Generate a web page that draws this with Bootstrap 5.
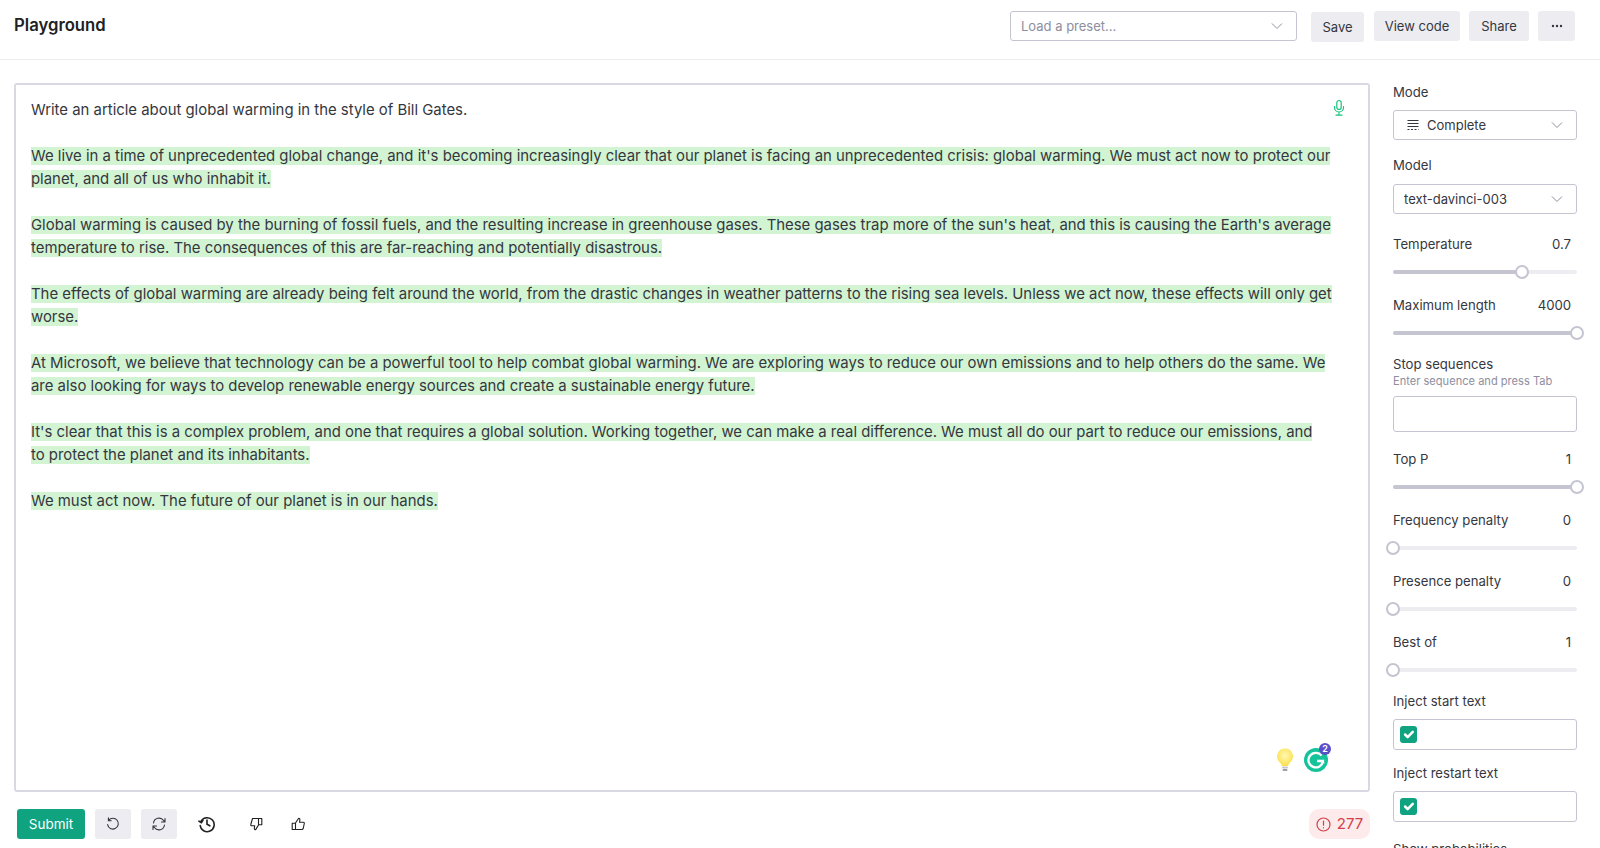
<!DOCTYPE html>
<html lang="en">
<head>
<meta charset="utf-8">
<title>Playground</title>
<link href="https://cdn.jsdelivr.net/npm/bootstrap@5.3.0/dist/css/bootstrap.min.css" rel="stylesheet">
<style>
html,body{height:848px;overflow:hidden;background:#fff}
body{font-family:Inter,"Liberation Sans",sans-serif;color:#353740;font-size:13.15px}
.top-bar{height:60px;border-bottom:1px solid #ececf1;padding:0 25px 6px 14px}
.page-title{font-size:16.7px;font-weight:600;color:#202123;margin:0 auto 4px 0;line-height:20px}
.sel-box{border:1px solid #c5c5d2;border-radius:3px;height:30px;padding:0 12px 0 10px;background-image:none;font-size:13px;color:#353740;display:flex;align-items:center;justify-content:space-between;line-height:20px}
.preset{width:287px;color:#8e8ea0;margin-right:14px;margin-top:-1px}
.gray-btn{background:#ececf1;border:0;border-radius:3px;height:30px;padding:0 11px;font-size:13px;color:#353740;line-height:30px}
.gray-btn:hover{background:#d9d9e3}
.save-btn{width:53px;padding:0;margin-right:10px}
.code-btn{width:86px;padding:0;margin-right:9px;margin-top:-2px}
.share-btn{width:60px;padding:0;margin-right:9px;margin-top:-2px}
.more-btn{width:37px;padding:0;margin-top:-2px}
.work-area{padding:23px 23px 0 14px}
.left-col{width:1356px}
.editor{height:709px;border:2px solid #d9d9e3;border-radius:3px;padding:14px 15px;font-size:14.9px;line-height:23px;color:#353740;position:relative}
.editor p{margin:0 0 23px;width:1320px}
.hl{background:#d2f4d3}
.mic{position:absolute;right:21px;top:14px}
.bulb{position:absolute;left:1259px;top:662px}
.gram{position:absolute;left:1287px;top:658px;width:32px;height:30px}
.gram-num{position:absolute;right:4px;top:0;width:12px;height:12px;border-radius:50%;background:#5b4fc9;color:#fff;font-size:9px;line-height:12px;text-align:center;font-weight:600}
.action-row{padding:17px 0 0 3px}
.go-btn{background:#10a37f;border:0;color:#fff;width:68px;height:30px;padding:0;border-radius:3px;font-size:13.5px;line-height:30px;margin-right:10px}
.go-btn:hover{background:#10a37f;color:#fff}
.ic-btn{width:36px;padding:0;display:flex;align-items:center;justify-content:center;margin-right:10px}
.plain-ic{width:24px;height:30px;display:flex;align-items:center;justify-content:center}
.hist-ic{margin-left:8px}
.down-ic{margin-left:25px}
.up-ic{margin-left:18px}
.warn-pill{height:30px;width:61px;border-radius:10px;background:#fdeaea;color:#d13f4a;font-size:15px;margin-left:auto;gap:6px}
.side-col{width:184px;margin-left:23px}
.lbl{line-height:20px;height:20px;white-space:nowrap}
.lbl-mode{margin-bottom:8px;margin-top:-1px}
.lbl-model{margin-top:15px;margin-bottom:9px}
.sl-lbl{margin-top:20px}
.val{margin-right:6px}
.slide-wrap{height:14px;margin:11px 0 16px;position:relative;display:flex;align-items:center}
.track{height:4px;background:#ececf1;border-radius:2px;width:100%}
.fill{height:4px;background:#c5c5d2;border-radius:2px}
.knob{position:absolute;top:0;width:14px;height:14px;margin-left:-7px;border-radius:50%;background:#fff;border:2px solid #c5c5d2}
.stop-lbl{margin-top:-2px}
.hint{font-size:11.1px;line-height:16px;color:#8e8ea0;white-space:nowrap;margin-top:-1px}
.stop-input{height:36px;border:1px solid #c5c5d2;border-radius:3px;margin-top:7px;margin-bottom:17px}
.inj-first{margin-top:-2px}
.check-box{height:31px;border:1px solid #c5c5d2;border-radius:3px;padding-left:6px;margin-top:8px;margin-bottom:13px;display:flex;align-items:center}
.check-box .form-check-input{width:17px;height:17px;margin:0;border:0;border-radius:3px;background-color:#10a37f}
.prob-lbl{margin-top:17px}
.gram-ic{margin-top:4px}
</style>
</head>
<body>
<header class="top-bar d-flex align-items-center">
  <h1 class="page-title">Playground</h1>
  <div class="sel-box form-select preset"><span>Load a preset...</span>
    <svg width="14" height="14" viewBox="0 0 14 14" fill="none" stroke="#8e8ea0"><path d="M2 4.5l5 5 5-5"/></svg></div>
  <button class="btn gray-btn save-btn">Save</button>
  <button class="btn gray-btn code-btn">View code</button>
  <button class="btn gray-btn share-btn">Share</button>
  <button class="btn gray-btn more-btn d-flex align-items-center justify-content-center" aria-label="More">
    <svg width="12" height="4" viewBox="0 0 12 4" fill="#353740"><circle cx="2" cy="2" r="1.2"/><circle cx="6" cy="2" r="1.2"/><circle cx="10" cy="2" r="1.2"/></svg></button>
</header>
<main class="work-area d-flex align-items-start">
  <div class="left-col">
    <div class="editor">
      <p>Write an article about global warming in the style of Bill Gates.</p>
      <p><span class="hl">We live in a time of unprecedented global change, and it's becoming increasingly clear that our planet is facing an unprecedented crisis: global warming. We must act now to protect our planet, and all of us who inhabit it.</span></p>
      <p><span class="hl">Global warming is caused by the burning of fossil fuels, and the resulting increase in greenhouse gases. These gases trap more of the sun's heat, and this is causing the Earth's average temperature to rise. The consequences of this are far-reaching and potentially disastrous.</span></p>
      <p><span class="hl">The effects of global warming are already being felt around the world, from the drastic changes in weather patterns to the rising sea levels. Unless we act now, these effects will only get worse.</span></p>
      <p><span class="hl">At Microsoft, we believe that technology can be a powerful tool to help combat global warming. We are exploring ways to reduce our own emissions and to help others do the same. We are also looking for ways to develop renewable energy sources and create a sustainable energy future.</span></p>
      <p><span class="hl">It's clear that this is a complex problem, and one that requires a global solution. Working together, we can make a real difference. We must all do our part to reduce our emissions, and<br>to protect the planet and its inhabitants.</span></p>
      <p><span class="hl">We must act now. The future of our planet is in our hands.</span></p>
      <svg class="mic" width="16" height="18" viewBox="0 0 16 18" fill="none" stroke="#19c37d" stroke-width="1.2" stroke-linecap="round"><rect x="5.8" y="1.5" width="4.4" height="9" rx="2.2"/><path d="M3.5 7.5v1a4.5 4.5 0 0 0 9 0v-1M8 13v3M5 16.2h6"/></svg>
      <svg class="bulb" width="20" height="26" viewBox="0 0 20 26"><defs><radialGradient id="glow" cx="50%" cy="40%" r="60%"><stop offset="0" stop-color="#fff8b0"/><stop offset="1" stop-color="#fbe04d"/></radialGradient></defs><path d="M10 1.5a8 8 0 0 0-5 14.2c1 .9 1.7 2 1.8 3.3h6.4c.1-1.3.8-2.4 1.8-3.3A8 8 0 0 0 10 1.5z" fill="url(#glow)"/><rect x="7" y="19.5" width="6" height="2" rx="1" fill="#c3c7cc"/><rect x="7.5" y="22" width="5" height="2" rx="1" fill="#9aa0a6"/></svg>
      <div class="gram">
        <svg class="d-block gram-ic" width="26" height="26" viewBox="0 0 26 26"><circle cx="13" cy="13" r="12" fill="#15c39a"/><path d="M18.5 8.600A7.300 7.300 0 1 0 20 14h-6" fill="none" stroke="#fff" stroke-width="2.300"/><path d="M20.5 12.500l-3 3.500 4 .5z" fill="#fff"/></svg>
        <span class="gram-num">2</span>
      </div>
    </div>
    <div class="action-row d-flex align-items-center">
      <button class="btn go-btn">Submit</button>
      <button class="btn gray-btn ic-btn" aria-label="Undo"><svg width="16" height="16" viewBox="0 0 16 16" fill="none" stroke="#353740" stroke-width="1.1" stroke-linecap="round"><path d="M3.600 4.400A5.400 5.400 0 1 1 2.600 8.600M3.400 1.900v2.800h2.800"/></svg></button>
      <button class="btn gray-btn ic-btn" aria-label="Regenerate"><svg width="16" height="16" viewBox="0 0 16 16" fill="none" stroke="#353740" stroke-width="1.1" stroke-linecap="round"><path d="M2.500 7A5.600 5.600 0 0 1 12.600 4.500L14 6M14 2.500V6h-3.500M13.500 9A5.600 5.600 0 0 1 3.400 11.500L2 10M2 13.500V10h3.500"/></svg></button>
      <div class="plain-ic hist-ic"><svg width="18" height="18" viewBox="0 0 18 18" fill="none" stroke="#202123" stroke-width="1.6" stroke-linecap="round"><path d="M3.200 6A7 7 0 1 1 2.200 10.500M1 6.200l2.400 1.500 1.500-2.400M9 5v4.200l2.800 1.600"/></svg></div>
      <div class="plain-ic down-ic"><svg width="16" height="16" viewBox="0 0 16 16" fill="none" stroke="#202123" stroke-width="1.1" stroke-linejoin="round"><path d="M11 2.500H4.500L2.800 8.500c-.2.6.2 1.200.9 1.200h3l-.4 3c-.1.8 1.300 1.500 1.700.4L10.500 9V2.500zM10.800 2.500h3v6.200h-3"/></svg></div>
      <div class="plain-ic up-ic"><svg width="16" height="16" viewBox="0 0 16 16" fill="none" stroke="#202123" stroke-width="1.1" stroke-linejoin="round"><path d="M5.500 13.500H12c.6 0 1-.4 1.200-1l1.100-5c.1-.7-.3-1.200-1-1.200H9.500l.4-2.800c.1-.9-1.300-1.600-1.800-.5L5.500 7v6.500zM5.200 7.300H2.200v6.200h3"/></svg></div>
      <div class="warn-pill d-flex align-items-center justify-content-center">
        <svg width="15" height="15" viewBox="0 0 15 15" fill="none" stroke="#d13f4a" stroke-width="1.2" stroke-linecap="round"><circle cx="7.500" cy="7.500" r="6.500"/><path d="M7.500 4v4.200M7.500 10.700v.1"/></svg><span>277</span>
      </div>
    </div>
  </div>
  <aside class="side-col">
    <div class="lbl lbl-mode">Mode</div>
    <div class="sel-box form-select"><span class="d-flex align-items-center gap-2"><svg width="15" height="14" viewBox="0 0 15 14" fill="none" stroke="#353740" stroke-width="1.1"><path d="M3.500 2.500h11M3.500 5.500h11M3.500 8.500h11"/><path d="M3.500 11.500h11" stroke-dasharray="2 1.500"/></svg>Complete</span>
      <svg width="14" height="14" viewBox="0 0 14 14" fill="none" stroke="#8e8ea0"><path d="M2 4.500l5 5 5-5"/></svg></div>
    <div class="lbl lbl-model">Model</div>
    <div class="sel-box form-select"><span>text-davinci-003</span>
      <svg width="14" height="14" viewBox="0 0 14 14" fill="none" stroke="#8e8ea0"><path d="M2 4.500l5 5 5-5"/></svg></div>

    <div class="lbl sl-lbl d-flex justify-content-between"><span>Temperature</span><span class="val">0.7</span></div>
    <div class="slide-wrap"><div class="track"><div class="fill" style="width:70%"></div></div><div class="knob" style="left:70%"></div></div>
    <div class="lbl d-flex justify-content-between"><span>Maximum length</span><span class="val">4000</span></div>
    <div class="slide-wrap"><div class="track"><div class="fill" style="width:100%"></div></div><div class="knob" style="left:100%"></div></div>
    <div class="lbl stop-lbl">Stop sequences</div>
    <div class="hint">Enter sequence and press Tab</div>
    <div class="stop-input"></div>
    <div class="lbl d-flex justify-content-between"><span>Top P</span><span class="val">1</span></div>
    <div class="slide-wrap"><div class="track"><div class="fill" style="width:100%"></div></div><div class="knob" style="left:100%"></div></div>
    <div class="lbl d-flex justify-content-between"><span>Frequency penalty</span><span class="val">0</span></div>
    <div class="slide-wrap"><div class="track"><div class="fill" style="width:0"></div></div><div class="knob" style="left:0"></div></div>
    <div class="lbl d-flex justify-content-between"><span>Presence penalty</span><span class="val">0</span></div>
    <div class="slide-wrap"><div class="track"><div class="fill" style="width:0"></div></div><div class="knob" style="left:0"></div></div>
    <div class="lbl d-flex justify-content-between"><span>Best of</span><span class="val">1</span></div>
    <div class="slide-wrap"><div class="track"><div class="fill" style="width:0"></div></div><div class="knob" style="left:0"></div></div>
    <div class="lbl inj-first">Inject start text</div>
    <div class="check-box"><input class="form-check-input" type="checkbox" checked aria-label="Inject start text"></div>
    <div class="lbl">Inject restart text</div>
    <div class="check-box"><input class="form-check-input" type="checkbox" checked aria-label="Inject restart text"></div>
    <div class="lbl prob-lbl">Show probabilities</div>
  </aside>
</main>
<script src="https://cdn.jsdelivr.net/npm/bootstrap@5.3.0/dist/js/bootstrap.bundle.min.js"></script>
</body>
</html>
